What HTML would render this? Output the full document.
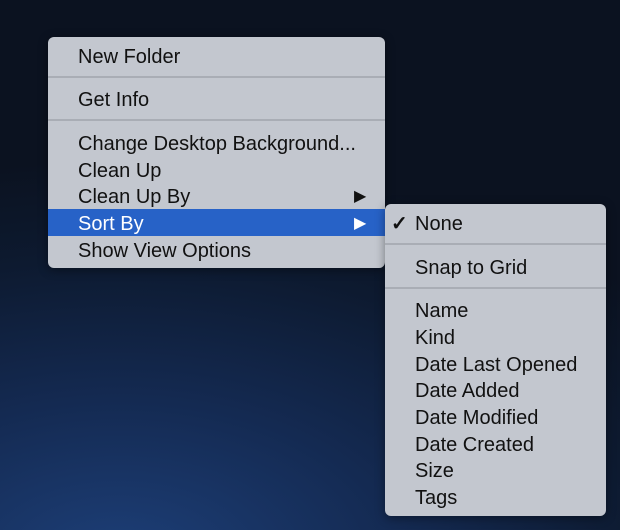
<!DOCTYPE html>
<html><head><style>
html,body{margin:0;padding:0}
body{width:620px;height:530px;overflow:hidden;position:relative;
background:radial-gradient(ellipse 700px 400px at 120px 560px,#1d3f78 0%,#142a52 40%,#0d1a30 75%,#0b1220 100%);
font-family:"Liberation Sans",sans-serif;font-size:20px;color:#111}
.m{position:absolute;background:#c3c7cf;border-radius:6px;box-shadow:0 2px 10px rgba(0,0,0,.4)}
.t{position:absolute;white-space:nowrap;line-height:20px;transform:translateY(-8px)}
.s{position:absolute;height:2px;background:#a9adb5}
.hl{position:absolute;background:#2762c7}
.w{color:#fff}
.a{font-size:16px;left:306px}
</style></head><body>
<div class="m" style="left:48px;top:37px;width:337px;height:231px">
  <div class="t" style="left:30px;top:18px">New Folder</div>
  <div class="s" style="left:0;right:0;top:39px"></div>
  <div class="t" style="left:30px;top:61px">Get Info</div>
  <div class="s" style="left:0;right:0;top:82px"></div>
  <div class="t" style="left:30px;top:105px">Change Desktop Background...</div>
  <div class="t" style="left:30px;top:132px">Clean Up</div>
  <div class="t" style="left:30px;top:158px">Clean Up By</div>
  <div class="t a" style="top:158px">&#9654;</div>
  <div class="hl" style="left:0;right:0;top:172px;height:27px"></div>
  <div class="t w" style="left:30px;top:185px">Sort By</div>
  <div class="t w a" style="top:185px">&#9654;</div>
  <div class="t" style="left:30px;top:212px">Show View Options</div>
</div>
<div class="m" style="left:385px;top:204px;width:221px;height:312px">
  <div class="t" style="left:6px;top:18px;font-weight:bold">&#10003;</div>
  <div class="t" style="left:30px;top:18px">None</div>
  <div class="s" style="left:0;right:0;top:39px"></div>
  <div class="t" style="left:30px;top:62px">Snap to Grid</div>
  <div class="s" style="left:0;right:0;top:83px"></div>
  <div class="t" style="left:30px;top:105px">Name</div>
  <div class="t" style="left:30px;top:132px">Kind</div>
  <div class="t" style="left:30px;top:159px">Date Last Opened</div>
  <div class="t" style="left:30px;top:185px">Date Added</div>
  <div class="t" style="left:30px;top:212px">Date Modified</div>
  <div class="t" style="left:30px;top:239px">Date Created</div>
  <div class="t" style="left:30px;top:265px">Size</div>
  <div class="t" style="left:30px;top:292px">Tags</div>
</div>
</body></html>
